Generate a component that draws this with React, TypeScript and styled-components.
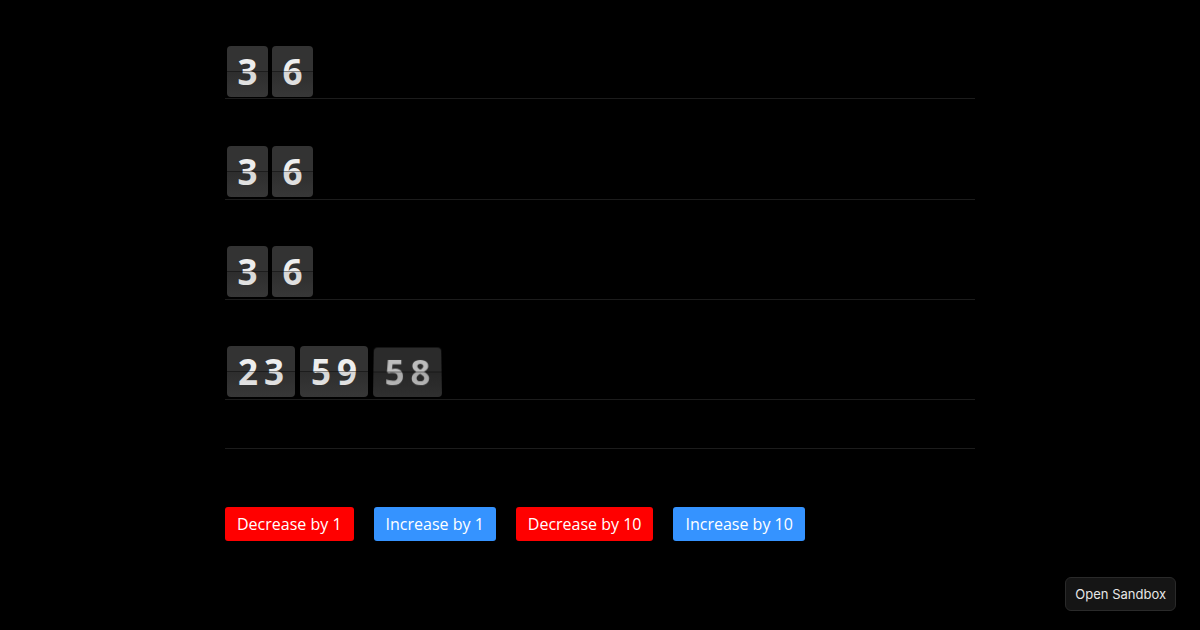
import React, { useState } from "react";
import styled, { createGlobalStyle, css } from "styled-components";

const Global = createGlobalStyle`
  html, body {
    margin: 0;
    background: #000;
    font-family: "Open Sans", "Liberation Sans", sans-serif;
  }
`;

const Wrap = styled.div`
  width: 750px;
  margin: 0 auto;
  height: 630px;
`;

const Row = styled.div<{ $empty?: boolean; $gap?: number }>`
  display: flex;
  gap: ${(p) => p.$gap ?? 4}px;
  padding: 46px 0 2px 2px;
  height: 51px;
  border-bottom: 1px solid #1c1c1c;
  &:first-child {
    padding-bottom: 1px;
  }
  &:nth-child(2) {
    padding-top: 47px;
  }
  ${(p) =>
    p.$empty &&
    css`
      height: 0;
      padding: 48px 0 0 0;
    `}
`;

const Card = styled.div<{ $w: number; $flipping?: boolean }>`
  position: relative;
  width: ${(p) => p.$w}px;
  height: 51px;
  border-radius: 4px;
  background: #333;
  color: #eee;
  font-family: "Open Sans", sans-serif;
  font-weight: 700;
  font-size: 35px;
  line-height: 51px;
  text-align: center;
  letter-spacing: ${(p) => (p.$w > 50 ? "6px" : "0")};
  text-indent: ${(p) => (p.$w > 50 ? "6px" : "0")};
  overflow: hidden;
  ${(p) =>
    p.$flipping &&
    css`
      background: #2b2b2b;
      color: #bdbdbd;
      transform-origin: 50% 100%;
      transform: perspective(260px) rotateX(7deg);
    `}
  &::before {
    content: "";
    position: absolute;
    left: 0;
    right: 0;
    top: 26px;
    height: 25px;
    background: linear-gradient(rgba(0, 0, 0, 0.1), rgba(255, 255, 255, 0.02));
  }
  &::after {
    content: "";
    position: absolute;
    left: 0;
    right: 0;
    top: 25px;
    height: 1px;
    background: rgba(0, 0, 0, 0.45);
  }
`;

const Buttons = styled.div`
  display: flex;
  gap: 20px;
  margin-top: 58px;
`;

const Btn = styled.button<{ $kind: "dec" | "inc" }>`
  height: 34px;
  padding: 0 12px;
  border: none;
  border-radius: 3px;
  background: ${(p) => (p.$kind === "dec" ? "#ff0000" : "#3593ff")};
  color: #fff;
  font-family: "Open Sans", sans-serif;
  font-size: 16px;
  cursor: pointer;
`;

const Sandbox = styled.button`
  position: fixed;
  right: 24px;
  bottom: 19px;
  height: 34px;
  padding: 0 9px;
  border: 1px solid #2a2a2a;
  border-radius: 6px;
  background: #151515;
  color: #e6e6e6;
  font-family: Inter, "Liberation Sans", sans-serif;
  font-size: 13px;
`;

const pad = (n: number) => String(n).padStart(2, "0");

export default function App() {
  const [value, setValue] = useState(36);
  const digits = String(value).split("");

  const counter = (
    <>
      {digits.map((d, i) => (
        <Card key={i} $w={41}>
          {d}
        </Card>
      ))}
    </>
  );

  return (
    <>
      <Global />
      <Wrap>
        <Row>{counter}</Row>
        <Row>{counter}</Row>
        <Row>{counter}</Row>
        <Row $gap={5}>
          <Card $w={68}>{pad(23)}</Card>
          <Card $w={68}>{pad(59)}</Card>
          <Card $w={69} $flipping>
            {pad(58)}
          </Card>
        </Row>
        <Row $empty />
        <Buttons>
          <Btn $kind="dec" onClick={() => setValue(value - 1)}>
            Decrease by 1
          </Btn>
          <Btn $kind="inc" onClick={() => setValue(value + 1)}>
            Increase by 1
          </Btn>
          <Btn $kind="dec" onClick={() => setValue(value - 10)}>
            Decrease by 10
          </Btn>
          <Btn $kind="inc" onClick={() => setValue(value + 10)}>
            Increase by 10
          </Btn>
        </Buttons>
      </Wrap>
      <Sandbox>Open Sandbox</Sandbox>
    </>
  );
}
